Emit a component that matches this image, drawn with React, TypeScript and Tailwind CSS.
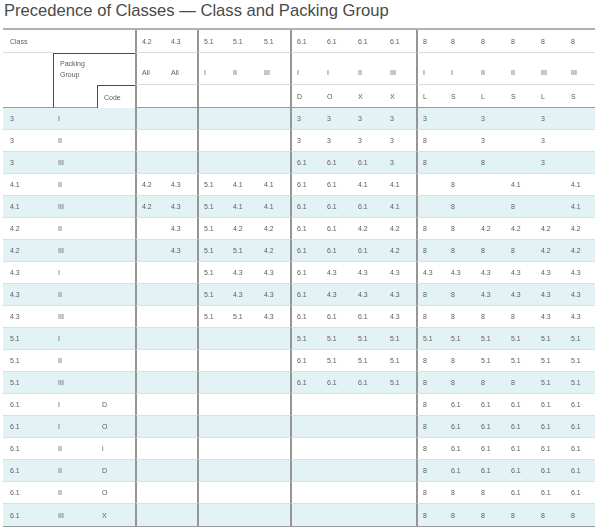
const COLS = [50, 44, 38, 31, 31, 31, 31, 31, 32, 31, 32, 31, 30, 30, 30, 30, 30, 29]
// first cell of each group gets the heavy rule
const GROUP_START = new Set([3, 5, 8, 12])

const HEAD_CLASS = ['4.2', '4.3', '5.1', '5.1', '5.1', '6.1', '6.1', '6.1', '6.1', '8', '8', '8', '8', '8', '8']
const HEAD_PG = ['All', 'All', 'I', 'II', 'III', 'I', 'I', 'II', 'III', 'I', 'I', 'II', 'II', 'III', 'III']
const HEAD_CODE = ['', '', '', '', '', 'D', 'O', 'X', 'X', 'L', 'S', 'L', 'S', 'L', 'S']

const ROWS: string[][] = [
  ['3', 'I', '', '', '', '', '', '', '3', '3', '3', '3', '3', '', '3', '', '3', ''],
  ['3', 'II', '', '', '', '', '', '', '3', '3', '3', '3', '8', '', '3', '', '3', ''],
  ['3', 'III', '', '', '', '', '', '', '6.1', '6.1', '6.1', '3', '8', '', '8', '', '3', ''],
  ['4.1', 'II', '', '4.2', '4.3', '5.1', '4.1', '4.1', '6.1', '6.1', '4.1', '4.1', '', '8', '', '4.1', '', '4.1'],
  ['4.1', 'III', '', '4.2', '4.3', '5.1', '4.1', '4.1', '6.1', '6.1', '6.1', '4.1', '', '8', '', '8', '', '4.1'],
  ['4.2', 'II', '', '', '4.3', '5.1', '4.2', '4.2', '6.1', '6.1', '4.2', '4.2', '8', '8', '4.2', '4.2', '4.2', '4.2'],
  ['4.2', 'III', '', '', '4.3', '5.1', '5.1', '4.2', '6.1', '6.1', '6.1', '4.2', '8', '8', '8', '8', '4.2', '4.2'],
  ['4.3', 'I', '', '', '', '5.1', '4.3', '4.3', '6.1', '4.3', '4.3', '4.3', '4.3', '4.3', '4.3', '4.3', '4.3', '4.3'],
  ['4.3', 'II', '', '', '', '5.1', '4.3', '4.3', '6.1', '4.3', '4.3', '4.3', '8', '8', '4.3', '4.3', '4.3', '4.3'],
  ['4.3', 'III', '', '', '', '5.1', '5.1', '4.3', '6.1', '6.1', '6.1', '4.3', '8', '8', '8', '8', '4.3', '4.3'],
  ['5.1', 'I', '', '', '', '', '', '', '5.1', '5.1', '5.1', '5.1', '5.1', '5.1', '5.1', '5.1', '5.1', '5.1'],
  ['5.1', 'II', '', '', '', '', '', '', '6.1', '5.1', '5.1', '5.1', '8', '8', '5.1', '5.1', '5.1', '5.1'],
  ['5.1', 'III', '', '', '', '', '', '', '6.1', '6.1', '6.1', '5.1', '8', '8', '8', '8', '5.1', '5.1'],
  ['6.1', 'I', 'D', '', '', '', '', '', '', '', '', '', '8', '6.1', '6.1', '6.1', '6.1', '6.1'],
  ['6.1', 'I', 'O', '', '', '', '', '', '', '', '', '', '8', '6.1', '6.1', '6.1', '6.1', '6.1'],
  ['6.1', 'II', 'i', '', '', '', '', '', '', '', '', '', '8', '6.1', '6.1', '6.1', '6.1', '6.1'],
  ['6.1', 'II', 'D', '', '', '', '', '', '', '', '', '', '8', '6.1', '6.1', '6.1', '6.1', '6.1'],
  ['6.1', 'II', 'O', '', '', '', '', '', '', '', '', '', '8', '8', '8', '6.1', '6.1', '6.1'],
  ['6.1', 'III', 'X', '', '', '', '', '', '', '', '', '', '8', '8', '8', '8', '8', '8'],
]

function cellCls(i: number) {
  return `${GROUP_START.has(i) ? 'border-l-2 border-l-[#959595]' : ''} ${i === 0 ? 'pl-[7px]' : 'pl-[5px]'}`
}

export default function App() {
  return (
    <div className="px-[3px] bg-white text-[#5c5c5c] antialiased" style={{ fontFamily: '"Liberation Sans", Arial, sans-serif' }}>
      <h1 className="pl-[1px] pt-[1px] text-[16.6px] leading-[20px] text-[#4a4a4a]">
        Precedence of Classes — Class and Packing Group
      </h1>

      <table className="mt-[7px] table-fixed border-separate border-spacing-0 text-[7px] leading-[11px] will-change-transform border-t-2 border-t-[#b0b0b0] border-b-2 border-b-[#9a9a9a]" style={{ width: 592 }}>
        <colgroup>
          {COLS.map((w, i) => <col key={i} style={{ width: w }} />)}
        </colgroup>
        <thead>
          {/* ── Class ── */}
          <tr>
            <th className="h-[23px] p-0 pl-[7px] text-left font-normal align-middle border-b border-b-[#dcdcdc]">Class</th>
            <th colSpan={2} className="p-0 font-normal" />
            {HEAD_CLASS.map((v, j) => (
              <th key={j} className={`p-0 text-left font-normal align-middle border-b border-b-[#dcdcdc] ${cellCls(j + 3)}`}>{v}</th>
            ))}
          </tr>
          {/* ── Packing group ── */}
          <tr>
            <th className="h-[32px] p-0" />
            <th colSpan={2} className="p-0 pl-[6px] pt-[4px] text-left font-normal align-top border-l border-t border-[#4a4a4a]">
              Packing<br />Group
            </th>
            {HEAD_PG.map((v, j) => (
              <th key={j} className={`p-0 pb-[6px] text-left font-normal align-bottom border-b border-b-[#dcdcdc] ${cellCls(j + 3)}`}>{v}</th>
            ))}
          </tr>
          {/* ── Code ── */}
          <tr>
            <th className="h-[23px] p-0 border-b border-b-[#9a9a9a]" />
            <th className="p-0 border-l border-l-[#4a4a4a] border-b border-b-[#9a9a9a]" />
            <th className="p-0 pl-[6px] text-left font-normal align-middle border-l border-t border-[#4a4a4a] border-b-[#9a9a9a]">Code</th>
            {HEAD_CODE.map((v, j) => (
              <th key={j} className={`p-0 text-left font-normal align-middle border-b border-b-[#9a9a9a] ${cellCls(j + 3)}`}>{v}</th>
            ))}
          </tr>
        </thead>
        <tbody>
          {ROWS.map((row, r) => (
            <tr key={r} className={r % 2 === 0 ? 'bg-[#e3f3f5]' : 'bg-white'}>
              {row.map((v, i) => (
                <td key={i} className={`h-[22px] p-0 align-middle ${r < ROWS.length - 1 ? 'border-b border-b-[#dedede]' : ''} ${cellCls(i)}`}>
                  {v}
                </td>
              ))}
            </tr>
          ))}
        </tbody>
      </table>
    </div>
  )
}
